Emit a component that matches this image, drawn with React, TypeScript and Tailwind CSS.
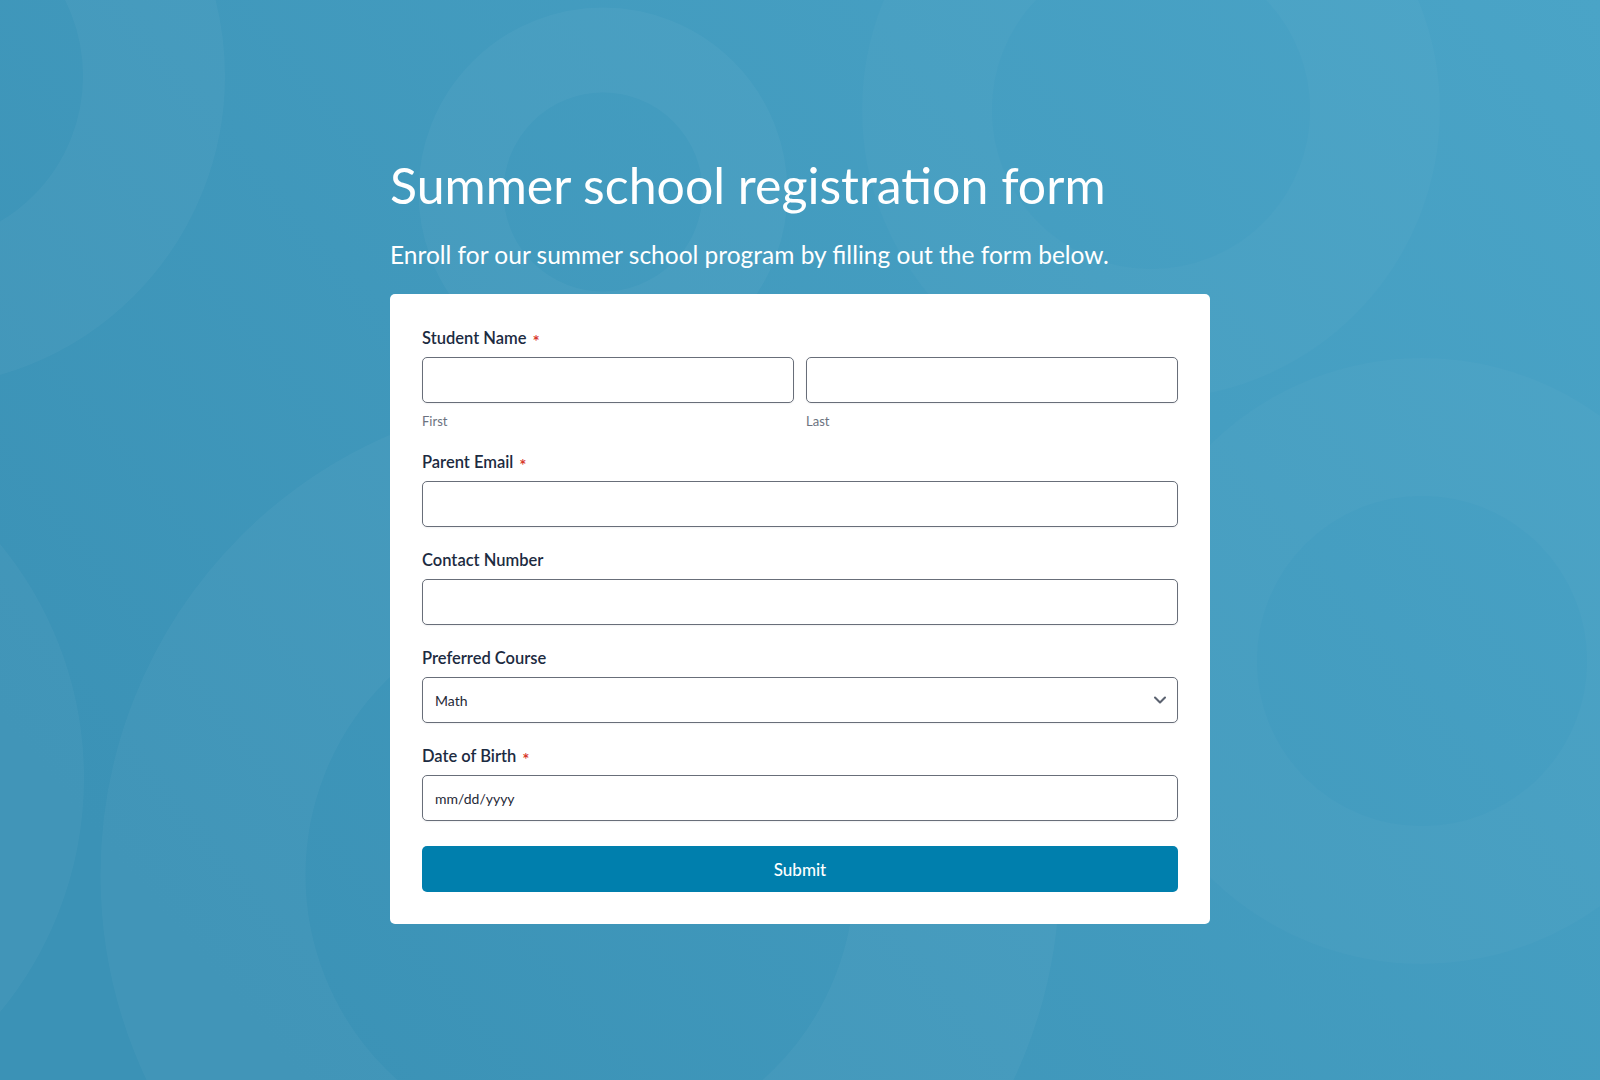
import { ChevronDown } from 'lucide-react';

function Background() {
  return (
    <svg
      className="absolute inset-0 h-full w-full"
      viewBox="0 0 1600 1080"
      preserveAspectRatio="none"
      aria-hidden="true"
    >
      <defs>
        <linearGradient id="bg" x1="1600" y1="0" x2="300" y2="1080" gradientUnits="userSpaceOnUse">
          <stop offset="0" stopColor="#4aa4c7" />
          <stop offset="1" stopColor="#3b92b6" />
        </linearGradient>
      </defs>
      <rect width="1600" height="1080" fill="url(#bg)" />
      <g fill="none" stroke="#ffffff" strokeOpacity="0.035">
        <circle cx="-86" cy="76" r="240" strokeWidth="142" />
        <circle cx="603" cy="192" r="142" strokeWidth="85" />
        <circle cx="-284" cy="778" r="259" strokeWidth="218" />
        <circle cx="580" cy="875" r="377" strokeWidth="205" />
      </g>
      <g fill="none" stroke="#ffffff" strokeOpacity="0.025">
        <circle cx="1151" cy="110" r="224" strokeWidth="130" />
        <circle cx="1422" cy="661" r="234" strokeWidth="138" />
      </g>
    </svg>
  );
}

function Label({ text, required }: { text: string; required?: boolean }) {
  return (
    <label className="mb-2 flex h-[23px] items-center pt-[2px] text-[16.5px] leading-[21px] font-semibold text-[#1c2b41]">
      {text}
      {required && (
        <span className="ml-[6px] translate-y-[3px] text-[17px] leading-none text-[#d8382b]">*</span>
      )}
    </label>
  );
}

const inputCls =
  'h-[46px] w-full rounded-[5px] border border-[#686e79] bg-white px-3 text-[14px] text-[#1f2937] shadow-[0_1px_2px_rgba(15,23,42,0.06)] outline-none';

export default function App() {
  return (
    <div className="relative min-h-screen overflow-hidden font-['Lato','Noto_Sans',sans-serif]">
      <Background />

      <div className="relative mx-auto flex w-[820px] flex-col pt-[155px] pb-[156px]">
        <h1 className="text-[50px] leading-[60px] font-normal text-white">Summer school registration form</h1>
        <p className="mt-[26px] text-[24.5px] leading-[28px] text-white">
          Enroll for our summer school program by filling out the form below.
        </p>

        <form className="mt-[25px] flex flex-col rounded-[5px] bg-white px-8 pt-8 pb-8">
          <div className="flex flex-col">
            <Label text="Student Name" required />
            <div className="flex gap-3">
              <div className="flex flex-1 flex-col">
                <input className={inputCls} />
                <span className="mt-[9px] text-[13px] leading-[18px] text-[#6b7280]">First</span>
              </div>
              <div className="flex flex-1 flex-col">
                <input className={inputCls} />
                <span className="mt-[9px] text-[13px] leading-[18px] text-[#6b7280]">Last</span>
              </div>
            </div>
          </div>

          <div className="mt-5 flex flex-col">
            <Label text="Parent Email" required />
            <input type="email" className={inputCls} />
          </div>

          <div className="mt-[21px] flex flex-col">
            <Label text="Contact Number" />
            <input type="tel" className={inputCls} />
          </div>

          <div className="mt-[21px] flex flex-col">
            <Label text="Preferred Course" />
            <div className="relative">
              <select defaultValue="Math" className={`${inputCls} appearance-none`}>
                <option>Math</option>
                <option>Science</option>
                <option>English</option>
                <option>Art</option>
              </select>
              <ChevronDown
                className="pointer-events-none absolute top-1/2 right-[8px] h-5 w-5 -translate-y-1/2 text-[#5b6270]"
                strokeWidth={2.5}
              />
            </div>
          </div>

          <div className="mt-[21px] flex flex-col">
            <Label text="Date of Birth" required />
            <input type="text" placeholder="mm/dd/yyyy" className={`${inputCls} placeholder:text-[#1f2937]`} />
          </div>

          <button
            type="button"
            className="mt-[25px] h-[46px] w-full rounded-[5px] bg-[#007fad] pt-[2px] text-[17px] font-medium text-white"
          >
            Submit
          </button>
        </form>
      </div>
    </div>
  );
}
